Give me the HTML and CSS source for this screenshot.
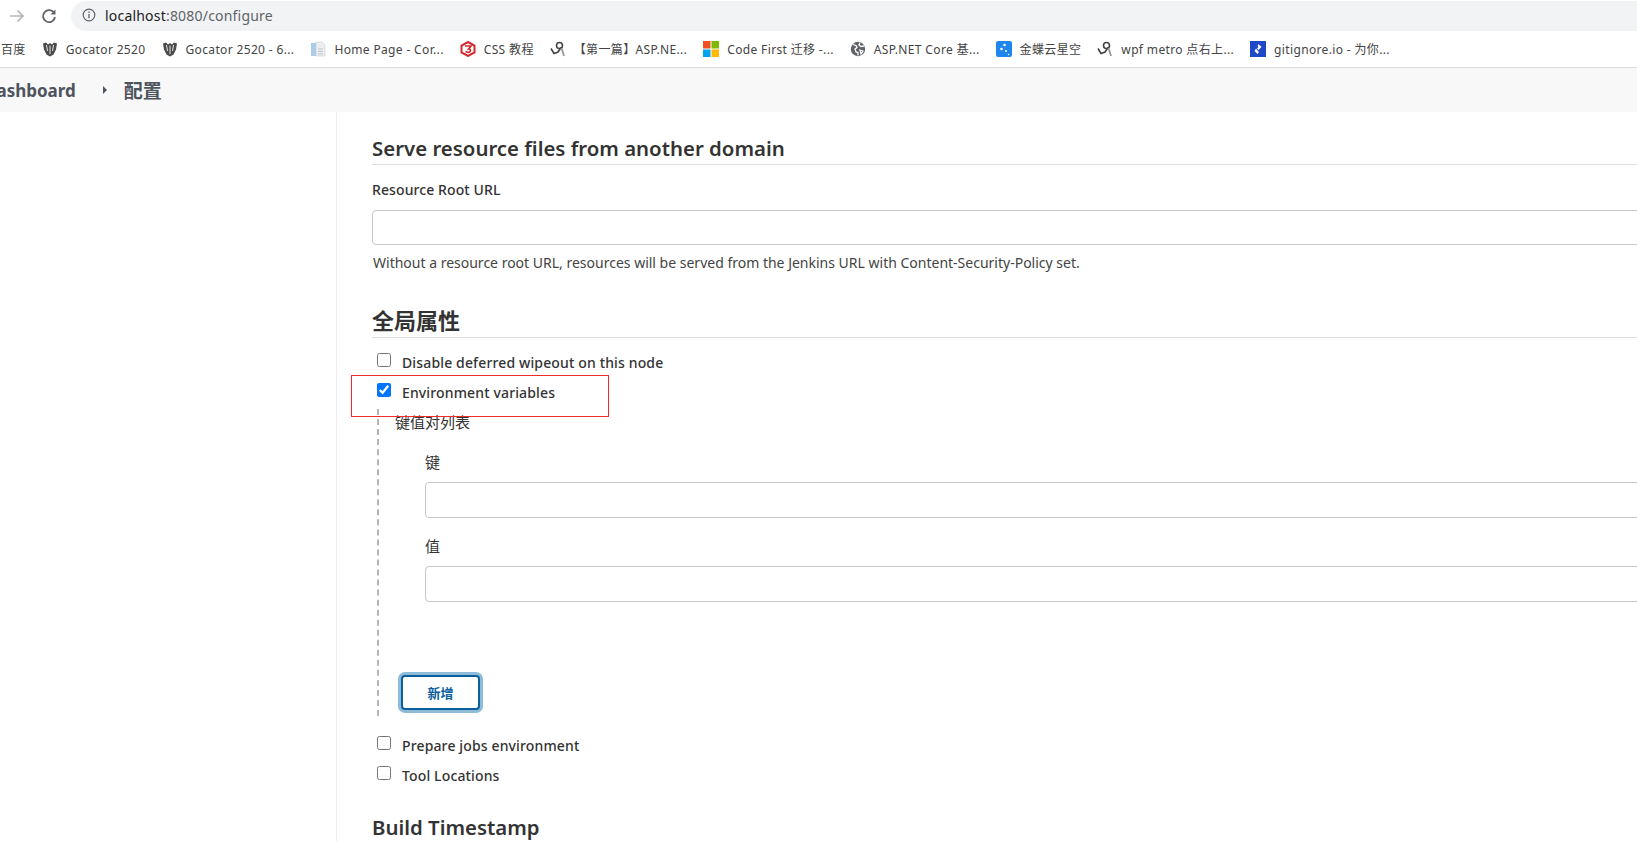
FILE: index.html
```html
<!DOCTYPE html>
<html lang="en">

<head>
  <meta charset="UTF-8">
  <meta name="viewport" content="width=device-width, initial-scale=1.0">
  <title>配置</title>
  <link rel="stylesheet" href="styles.css">
</head>

<body>
  <div class="toolbar">
    <svg class="nav-icon" viewBox="0 0 18 18" width="18" height="18">
      <path d="M2 9h13M9.500 3.500 15 9l-5.500 5.500" fill="none" stroke="#b4b6b9" stroke-width="1.700" />
    </svg>
    <svg class="nav-icon reload" viewBox="0 0 18 18" width="18" height="18">
      <path d="M14.300 6.200A6 6 0 1 0 15 10" fill="none" stroke="#5f6368" stroke-width="1.800" />
      <path d="M15.500 2.500v5h-5z" fill="#5f6368" />
    </svg>
    <div class="address">
      <svg viewBox="0 0 14 14" width="14" height="14">
        <circle cx="7" cy="7" r="5.800" fill="none" stroke="#5f6368" stroke-width="1.200" />
        <path d="M7 6v4.300M7 3.500v1.400" stroke="#5f6368" stroke-width="1.300" />
      </svg>
      <span class="host">localhost</span><span class="path">:8080/configure</span>
    </div>
  </div>

  <div class="bookmarks">
    <span class="bm bm-first">百度</span>
    <span class="bm">
      <svg viewBox="0 0 16 16" width="16" height="16">
        <path d="M1 2.500l3-1 2 2 2-1.500 2 1.500 2-2 3 1-1 6-2.500 5-3.500 2-3.500-2-2.500-5z" fill="#4a4a4a" />
        <path d="M4.500 4l1 6M8 4.500V13M11.500 4l-1 6" stroke="#e4e4e4" stroke-width="1" />
      </svg>
      Gocator 2520
    </span>
    <span class="bm">
      <svg viewBox="0 0 16 16" width="16" height="16">
        <path d="M1 2.500l3-1 2 2 2-1.500 2 1.500 2-2 3 1-1 6-2.500 5-3.500 2-3.500-2-2.500-5z" fill="#4a4a4a" />
        <path d="M4.500 4l1 6M8 4.500V13M11.500 4l-1 6" stroke="#e4e4e4" stroke-width="1" />
      </svg>
      Gocator 2520 - 6...
    </span>
    <span class="bm">
      <svg viewBox="0 0 16 16" width="16" height="16">
        <path d="M1 2h5v13H1z" fill="#a9cdea" />
        <path d="M6 1h6l3 3v11H6z" fill="#eceef0" stroke="#c9ccd0" stroke-width=".6" />
        <path d="M8 8h5M8 10.500h5M8 13h5" stroke="#c2c6ca" stroke-width="1" />
      </svg>
      Home Page - Cor...
    </span>
    <span class="bm">
      <svg viewBox="0 0 16 16" width="16" height="16">
        <path d="M8 1l6.500 3.500v7L8 15l-6.500-3.500v-7z" fill="none" stroke="#d3282f" stroke-width="2" />
        <path d="M5 5h6L8.500 8c2.500 0 3 3-.5 3.500L5.500 10.500" fill="none" stroke="#d3282f" stroke-width="1.600" />
      </svg>
      CSS 教程
    </span>
    <span class="bm">
      <svg viewBox="0 0 16 16" width="16" height="16">
        <circle cx="9.500" cy="4.500" r="3" fill="none" stroke="#444" stroke-width="1.600" />
        <path d="M1 7.500 4 12.500 8 11 11 6.500" fill="none" stroke="#444" stroke-width="1.600" />
        <path d="M11.500 7l2.500 8" fill="none" stroke="#999" stroke-width="1.800" />
      </svg>
      【第一篇】ASP.NE...
    </span>
    <span class="bm">
      <svg viewBox="0 0 16 16" width="16" height="16">
        <path d="M0 0h7.500v7.500H0z" fill="#f25022" />
        <path d="M8.500 0H16v7.500H8.500z" fill="#7fba00" />
        <path d="M0 8.500h7.500V16H0z" fill="#00a4ef" />
        <path d="M8.500 8.500H16V16H8.500z" fill="#ffb900" />
      </svg>
      Code First 迁移 -...
    </span>
    <span class="bm">
      <svg viewBox="0 0 16 16" width="16" height="16">
        <circle cx="8" cy="8" r="7.200" fill="#5f6368" />
        <path d="M3 3.500l3 1 1 2-2 1.500 1 3 2 .5 0 3M10 1.500l-1 2.500 2 1.500 3-.5M10 9l3 1-2 3z" fill="none" stroke="#fff" stroke-width="1.300" />
      </svg>
      ASP.NET Core 基...
    </span>
    <span class="bm">
      <svg viewBox="0 0 16 16" width="16" height="16">
        <rect width="16" height="16" rx="2" fill="#1f86ee" />
        <circle cx="8.500" cy="4" r="1.300" fill="#fff" />
        <circle cx="5.500" cy="8" r="1.300" fill="#fff" />
        <circle cx="10" cy="10" r="1" fill="#fff" />
        <circle cx="12.500" cy="13.500" r=".7" fill="#fff" />
      </svg>
      金蝶云星空
    </span>
    <span class="bm">
      <svg viewBox="0 0 16 16" width="16" height="16">
        <circle cx="9.500" cy="4.500" r="3" fill="none" stroke="#444" stroke-width="1.600" />
        <path d="M1 7.500 4 12.500 8 11 11 6.500" fill="none" stroke="#444" stroke-width="1.600" />
        <path d="M11.500 7l2.500 8" fill="none" stroke="#999" stroke-width="1.800" />
      </svg>
      wpf metro 点右上...
    </span>
    <span class="bm">
      <svg viewBox="0 0 16 16" width="16" height="16">
        <rect width="16" height="16" fill="#1d49c8" />
        <path d="M8.500 3l3 3-3 3-1.500-1.500L8.500 6 7.500 5zM6 7.500l1.500 2L9 11l-1.500 2-3-3z" fill="#fff" />
      </svg>
      gitignore.io - 为你...
    </span>
  </div>

  <div class="crumbs">
    <span class="crumb-root">Dashboard</span>
    <span class="crumb-arrow"></span>
    <span class="crumb-page">配置</span>
  </div>

  <div class="layout">
    <div class="side"></div>
    <div class="main">
      <h2 class="section-title">Serve resource files from another domain</h2>
      <div class="label">Resource Root URL</div>
      <input class="text-input" type="text">
      <div class="help">Without a resource root URL, resources will be served from the Jenkins URL with Content-Security-Policy set.</div>

      <h2 class="section-title cjk-title">全局属性</h2>
      <label class="check"><input type="checkbox">Disable deferred wipeout on this node</label>
      <label class="check"><input type="checkbox" checked>Environment variables</label>

      <div class="nested">
        <div class="list-title">键值对列表</div>
        <div class="pair">
          <div class="pair-label">键</div>
          <input class="text-input" type="text">
          <div class="pair-label second">值</div>
          <input class="text-input" type="text">
        </div>
        <button class="add-btn" type="button">新增</button>
      </div>

      <label class="check"><input type="checkbox">Prepare jobs environment</label>
      <label class="check"><input type="checkbox">Tool Locations</label>

      <h2 class="section-title last">Build Timestamp</h2>
    </div>
  </div>

  <div class="annotation"></div>
</body>

</html>
```

FILE: styles.css
```css
* {
  box-sizing: border-box;
}

html,
body {
  height: 100%;
}

body {
  margin: 0;
  width: 1637px;
  height: 841px;
  overflow: hidden;
  position: relative;
  background: #fff;
  color: #333;
  font-family: "Noto Sans", "Noto Sans CJK SC", sans-serif;
}

.toolbar {
  height: 31px;
  padding-top: 1px;
  display: flex;
  align-items: center;
}

.nav-icon {
  margin-left: 8px;
  flex: none;
}

.reload {
  margin-left: 14px;
}

.address {
  flex: 1;
  height: 30px;
  margin-left: 13px;
  padding: 0 0 2px 11px;
  display: flex;
  align-items: center;
  background: #f1f3f4;
  border-radius: 15px 0 0 15px;
  font-size: 14px;
  letter-spacing: .2px;
}

.address svg {
  margin-right: 9px;
}

.host {
  color: #202124;
}

.path {
  color: #5f6368;
}

.bookmarks {
  height: 37px;
  display: flex;
  align-items: center;
  border-bottom: 1px solid #dadce0;
  font-size: 12px;
  letter-spacing: .35px;
  color: #444;
  white-space: nowrap;
}

.bm {
  display: flex;
  align-items: center;
  gap: 8px;
  margin-left: 16px;
}

.bm-first {
  margin-left: 1px;
}

.crumbs {
  height: 44px;
  display: flex;
  align-items: center;
  background: #f8f8f8;
  color: #4d545d;
  font-weight: 700;
  font-size: 17px;
}

.crumb-root {
  margin-left: -16px;
}

.crumb-arrow {
  width: 0;
  height: 0;
  margin: 0 17px 0 27px;
  border-left: 4px solid #4d545d;
  border-top: 4px solid transparent;
  border-bottom: 4px solid transparent;
}

.crumb-page {
  font-size: 19px;
}

.layout {
  display: flex;
  height: 730px;
}

.side {
  width: 337px;
  flex: none;
  border-right: 1px solid #e9eef0;
}

.main {
  padding: 18px 0 0 35px;
  width: 1400px;
  flex: none;
  font-size: 14px;
}

.section-title {
  margin: 0;
  height: 35px;
  line-height: 37px;
  font-size: 20.4px;
  font-weight: 600;
  color: #333;
  border-bottom: 1px solid #ddd;
}

.cjk-title {
  margin-top: 32px;
  height: 33px;
  line-height: 31px;
  font-size: 22px;
  font-weight: 700;
}

.last {
  border: 0;
  margin-top: 19px;
}

.label {
  margin-top: 15px;
  font-weight: 500;
  line-height: 20px;
  letter-spacing: .1px;
}

.text-input {
  display: block;
  width: 100%;
  height: 35px;
  margin-top: 10px;
  border: 1px solid #c8c8c8;
  border-radius: 4px;
  background: #fff;
}

.help {
  margin: 8px 0 0 1px;
  line-height: 20px;
  font-size: 14px;
  color: #444;
}

.check {
  display: flex;
  align-items: center;
  height: 30px;
  font-weight: 500;
  letter-spacing: .14px;
  padding-left: 5px;
}

.check input {
  width: 14px;
  height: 14px;
  margin: 0 11px 4px 0;
  accent-color: #0075ff;
}

.cjk-title + .check {
  margin-top: 9px;
}

.nested {
  margin: 2px 0 14px 5px;
  padding-left: 16px;
  height: 307px;
  border-left: 2px dashed #b5b5b5;
}

.list-title {
  padding-top: 4px;
  line-height: 18px;
  font-size: 15px;
}

.pair {
  padding-left: 30px;
  margin-top: 21px;
}

.pair-label {
  line-height: 20px;
  font-size: 15px;
}

.pair-label.second {
  margin-top: 18px;
}

.pair .text-input {
  height: 36px;
  margin-top: 10px;
}

.add-btn {
  display: block;
  width: 79px;
  height: 35px;
  margin: 73px 0 0 6px;
  padding: 0;
  background: #fff;
  border: 2px solid #09609d;
  border-radius: 4px;
  box-shadow: 0 0 0 3px #8ebcd8;
  color: #09609d;
  font-family: inherit;
  font-size: 13px;
  font-weight: 700;
}

.annotation {
  position: absolute;
  left: 351px;
  top: 375px;
  width: 258px;
  height: 42px;
  border: 1px solid #ee2c2c;
}
```
